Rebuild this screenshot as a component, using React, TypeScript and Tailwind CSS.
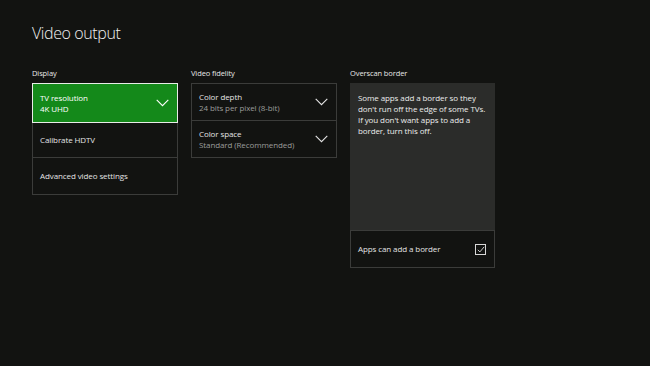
import React from "react";

const Chevron = () => (
  <svg width="13" height="8" viewBox="0 0 13 8" fill="none" className="shrink-0">
    <path d="M0.7 0.9 L6.5 6.7 L12.3 0.9" stroke="currentColor" strokeWidth="1.1" />
  </svg>
);

export default function App() {
  return (
    <div
      className="w-[650px] h-[366px] bg-[#121311] text-[#e4e4e4] overflow-hidden pl-[32px]"
      style={{ fontFamily: '"Open Sans", "Noto Sans", sans-serif' }}
    >
      <h1 className="pt-[21px] h-[66px] text-[16px] font-light text-[#f0f0f0] tracking-[-0.4px]">Video output</h1>
      <div className="flex gap-[13px]">
        {/* Display */}
        <div className="w-[146px] flex flex-col">
          <div className="h-[17px] text-[7.5px] leading-[14px] tracking-[-0.1px] text-[#e8e8e8]">Display</div>
          <div className="border border-[#3b3c3a] flex flex-col">
            <div className="h-[38px] bg-[#14891a] outline outline-[1.5px] outline-[#e8ece8] -outline-offset-[0.5px] flex items-center justify-between pl-[7px] pr-[8px] text-white">
              <div className="text-[8px] leading-[11px] tracking-[-0.1px]">
                <div>TV resolution</div>
                <div>4K UHD</div>
              </div>
              <Chevron />
            </div>
            <div className="h-[36px] border-b border-[#3b3c3a] flex items-center pl-[7px] text-[8px] tracking-[-0.1px]">Calibrate HDTV</div>
            <div className="h-[36px] flex items-center pl-[7px] text-[8px] tracking-[-0.1px]">Advanced video settings</div>
          </div>
        </div>
        {/* Video fidelity */}
        <div className="w-[146px] flex flex-col">
          <div className="h-[17px] text-[7.5px] leading-[14px] tracking-[-0.1px] text-[#e8e8e8]">Video fidelity</div>
          <div className="border border-[#3b3c3a] flex flex-col">
            <div className="h-[37px] border-b border-[#3b3c3a] flex items-center justify-between pl-[7px] pr-[8px]">
              <div className="text-[8px] leading-[11px] tracking-[-0.1px]">
                <div>Color depth</div>
                <div className="text-[#9c9d9b]">24 bits per pixel (8-bit)</div>
              </div>
              <Chevron />
            </div>
            <div className="h-[36px] flex items-center justify-between pl-[7px] pr-[8px]">
              <div className="text-[8px] leading-[11px] tracking-[-0.1px]">
                <div>Color space</div>
                <div className="text-[#9c9d9b]">Standard (Recommended)</div>
              </div>
              <Chevron />
            </div>
          </div>
        </div>
        {/* Overscan border */}
        <div className="w-[145px] flex flex-col">
          <div className="h-[17px] text-[7.5px] leading-[14px] tracking-[-0.1px] text-[#e8e8e8]">Overscan border</div>
          <div className="h-[147px] bg-[#2b2c2a] px-[8px] pt-[9px] text-[8px] leading-[11px] tracking-[-0.1px] text-[#ececec] whitespace-nowrap">
            Some apps add a border so they<br />
            don't run off the edge of some TVs.<br />
            If you don't want apps to add a<br />
            border, turn this off.
          </div>
          <div className="h-[38px] border border-[#3b3c3a] flex items-center justify-between pl-[7px] pr-[8px]">
            <span className="text-[8px] tracking-[-0.1px]">Apps can add a border</span>
            <div className="w-[11px] h-[11px] border border-[#d8d8d8] flex items-center justify-center">
              <svg width="8" height="7" viewBox="0 0 8 7" fill="none">
                <path d="M0.8 3.8 L2.9 5.9 L7.2 0.8" stroke="#e0e0e0" strokeWidth="0.9" />
              </svg>
            </div>
          </div>
        </div>
      </div>
    </div>
  );
}
